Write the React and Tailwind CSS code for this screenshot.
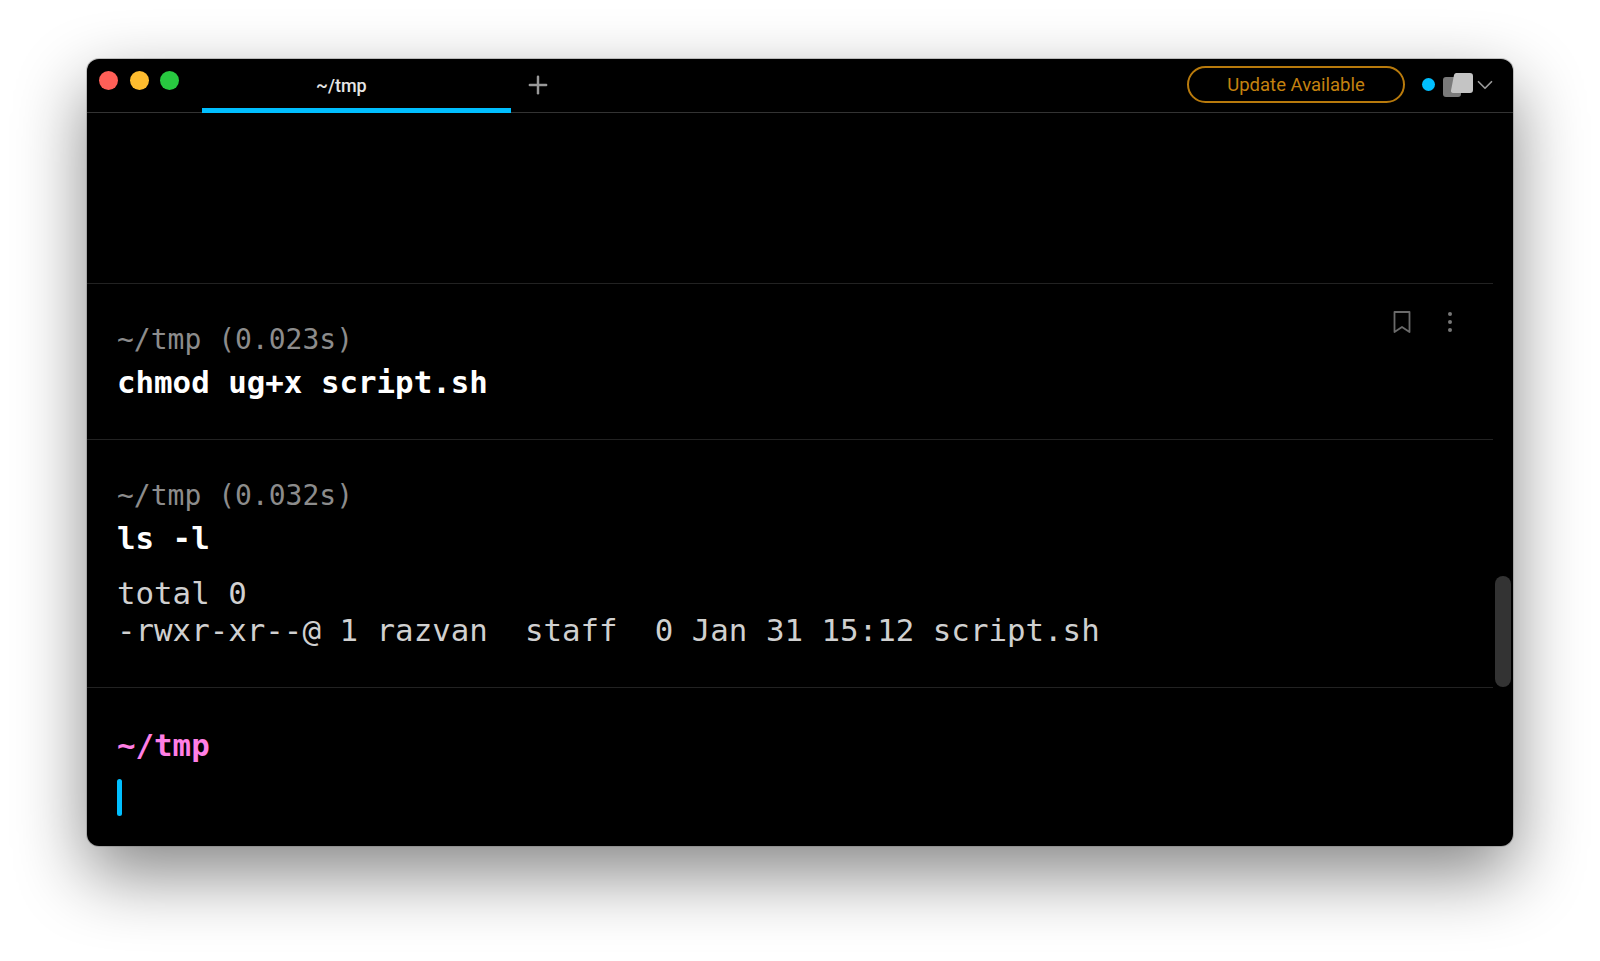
import { ChevronDown, Plus } from 'lucide-react';

const mono = 'font-["DejaVu_Sans_Mono",monospace]';

function Block({ dir, time, cmd, children }) {
    return (
        <div className="pl-[30px]">
            <div className="text-[28px] leading-[42px] text-[#8c8c8c] whitespace-pre">{dir} ({time})</div>
            <div className="text-[30.8px] leading-[42px] font-bold text-white whitespace-pre">{cmd}</div>
            {children}
        </div>
    );
}

export default function App() {
    return (
        <div className="h-[961px] w-[1600px] bg-white pl-[87px] pt-[59px] overflow-hidden">
            <div className={`relative flex h-[787px] w-[1426px] flex-col overflow-hidden rounded-[12px] bg-black shadow-[0_0_0_1px_rgba(120,120,120,0.4),0_28px_70px_rgba(0,0,0,0.48)] ${mono}`}>

                {/* Title bar */}
                <div className="flex h-[54px] shrink-0 items-start border-b border-[#333] font-['Roboto',sans-serif]">
                    <div className="flex w-[115px] shrink-0 gap-[11.5px] pl-[12px] pt-[12px]">
                        <span className="h-[19px] w-[19px] rounded-full bg-[#ff5f57]" />
                        <span className="h-[19px] w-[19px] rounded-full bg-[#febc2e]" />
                        <span className="h-[19px] w-[19px] rounded-full bg-[#28c840]" />
                    </div>
                    <div className="h-[54px] w-[309px] shrink-0 border-b-[5px] border-[#00bfff] pl-[114px] pt-[15px] text-[18px] font-medium leading-[24px] text-[#e6e6e6]">
                        ~/tmp
                    </div>
                    <Plus className="ml-[13px] mt-[12px] h-[28px] w-[28px] text-[#999]" strokeWidth={2.1} />
                    <div className="ml-auto mr-[15px] mt-[7px] flex items-center">
                        <div className="flex h-[37px] w-[218px] items-center justify-center rounded-full border-2 border-[#b87a0c] pt-[3px] text-[18.5px] text-[#c4820f]">
                            Update Available
                        </div>
                        <span className="ml-[17px] h-[13px] w-[13px] rounded-full bg-[#00bfff]" />
                        <svg className="ml-[8px]" width="30" height="24" viewBox="0 0 30 24">
                            <rect x="0" y="4" width="18" height="20" rx="3" fill="#7a7a7a" />
                            <path d="M13 0h14a3 3 0 0 1 3 3v14a3 3 0 0 1-3 3H10a2 2 0 0 1-2-2.5L11 2a2.5 2.5 0 0 1 2-2z" fill="#c4c4c4" />
                        </svg>
                        <ChevronDown className="-ml-px h-[26px] w-[26px] text-[#999]" strokeWidth={1.6} />
                    </div>
                </div>

                {/* Scrollback */}
                <div className="h-[171px] w-[1406px] shrink-0 border-b border-[#222]" />

                <div className="relative h-[156px] w-[1406px] shrink-0 border-b border-[#222] pt-[35px]">
                    <Block dir="~/tmp" time="0.023s" cmd="chmod ug+x script.sh" />
                    <svg className="absolute left-[1306px] top-[27px]" width="18" height="22" viewBox="0 0 18 22" fill="none" stroke="#6a6a6a" strokeWidth="1.8" strokeLinejoin="round">
                        <path d="M1.5 1h15v20L9 16l-7.500 5z" />
                    </svg>
                    <div className="absolute left-[1361px] top-[28px] flex flex-col gap-[4px]">
                        <span className="h-[4px] w-[4px] rounded-full bg-[#777]" />
                        <span className="h-[4px] w-[4px] rounded-full bg-[#777]" />
                        <span className="h-[4px] w-[4px] rounded-full bg-[#777]" />
                    </div>
                </div>

                <div className="h-[248px] w-[1406px] shrink-0 border-b border-[#222] pt-[35px]">
                    <Block dir="~/tmp" time="0.032s" cmd="ls -l">
                        <div className="mt-[16px] whitespace-pre text-[30.8px] leading-[37px] text-[#d0d0d0]">
                            {'total 0\n-rwxr-xr--@ 1 razvan  staff  0 Jan 31 15:12 script.sh'}
                        </div>
                    </Block>
                </div>

                {/* Prompt */}
                <div className="pl-[30px] pt-[36px]">
                    <div className="text-[30.8px] font-bold leading-[42px] text-[#ff7fe5]">~/tmp</div>
                    <div className="mt-[13px] h-[37px] w-[5px] rounded-full bg-[#00bfff]" />
                </div>

                {/* Scrollbar */}
                <div className="absolute left-[1408px] top-[517px] h-[111px] w-[16px] rounded-full bg-[#333]" />
            </div>
        </div>
    );
}
